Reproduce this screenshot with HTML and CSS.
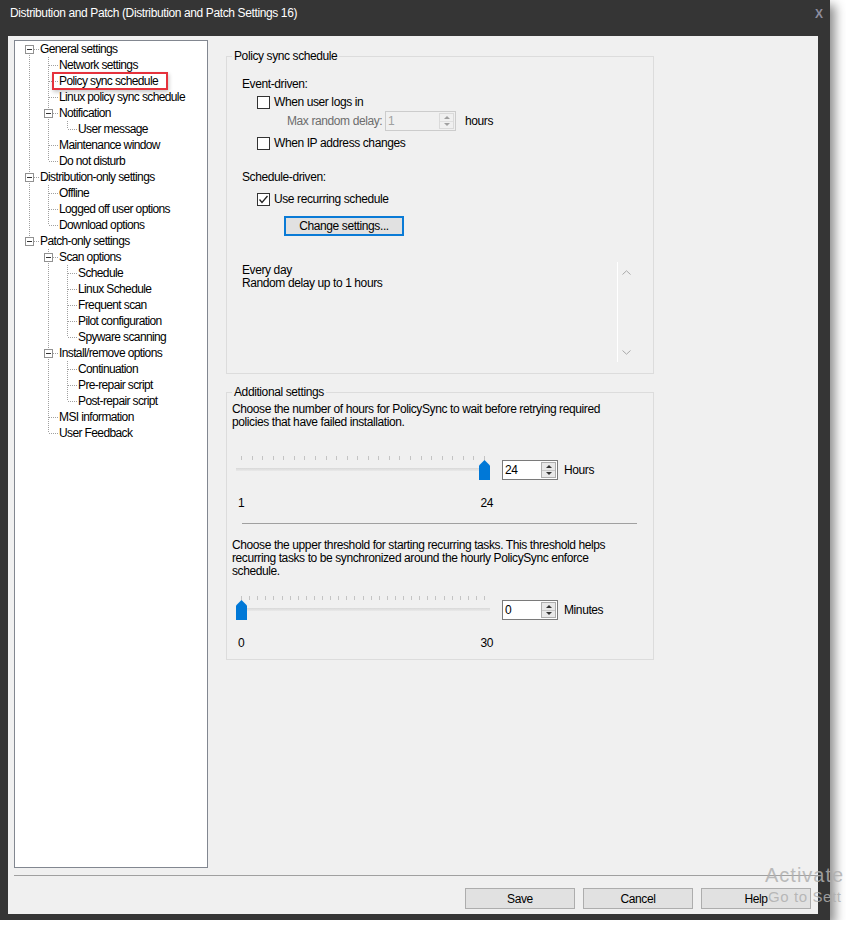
FILE: index.html
```html
<!doctype html>
<html>
<head>
  <meta charset="utf-8">
  <link rel="stylesheet" href="styles.css">
</head>
<body>
<div class="win">
  <div class="titlebar">
    <span class="title">Distribution and Patch (Distribution and Patch Settings 16)</span>
    <span class="close">X</span>
  </div>
  <div class="client">
    <div class="main">
      <div class="tree">
        <div class="row"><span class="c f"><span class="bx"></span></span><span class="lbl">General settings</span></div>
        <div class="row"><span class="c v"></span><span class="c t"></span><span class="lbl">Network settings</span></div>
        <div class="row"><span class="c v"></span><span class="c t"></span><span class="lbl sel">Policy sync schedule</span></div>
        <div class="row"><span class="c v"></span><span class="c t"></span><span class="lbl">Linux policy sync schedule</span></div>
        <div class="row"><span class="c v"></span><span class="c t"><span class="bx"></span></span><span class="lbl">Notification</span></div>
        <div class="row"><span class="c v"></span><span class="c v"></span><span class="c l"></span><span class="lbl">User message</span></div>
        <div class="row"><span class="c v"></span><span class="c t"></span><span class="lbl">Maintenance window</span></div>
        <div class="row"><span class="c v"></span><span class="c l"></span><span class="lbl">Do not disturb</span></div>
        <div class="row"><span class="c t"><span class="bx"></span></span><span class="lbl">Distribution-only settings</span></div>
        <div class="row"><span class="c v"></span><span class="c t"></span><span class="lbl">Offline</span></div>
        <div class="row"><span class="c v"></span><span class="c t"></span><span class="lbl">Logged off user options</span></div>
        <div class="row"><span class="c v"></span><span class="c l"></span><span class="lbl">Download options</span></div>
        <div class="row"><span class="c l"><span class="bx"></span></span><span class="lbl">Patch-only settings</span></div>
        <div class="row"><span class="c"></span><span class="c t"><span class="bx"></span></span><span class="lbl">Scan options</span></div>
        <div class="row"><span class="c"></span><span class="c v"></span><span class="c t"></span><span class="lbl">Schedule</span></div>
        <div class="row"><span class="c"></span><span class="c v"></span><span class="c t"></span><span class="lbl">Linux Schedule</span></div>
        <div class="row"><span class="c"></span><span class="c v"></span><span class="c t"></span><span class="lbl">Frequent scan</span></div>
        <div class="row"><span class="c"></span><span class="c v"></span><span class="c t"></span><span class="lbl">Pilot configuration</span></div>
        <div class="row"><span class="c"></span><span class="c v"></span><span class="c l"></span><span class="lbl">Spyware scanning</span></div>
        <div class="row"><span class="c"></span><span class="c t"><span class="bx"></span></span><span class="lbl">Install/remove options</span></div>
        <div class="row"><span class="c"></span><span class="c v"></span><span class="c t"></span><span class="lbl">Continuation</span></div>
        <div class="row"><span class="c"></span><span class="c v"></span><span class="c t"></span><span class="lbl">Pre-repair script</span></div>
        <div class="row"><span class="c"></span><span class="c v"></span><span class="c l"></span><span class="lbl">Post-repair script</span></div>
        <div class="row"><span class="c"></span><span class="c t"></span><span class="lbl">MSI information</span></div>
        <div class="row"><span class="c"></span><span class="c l"></span><span class="lbl">User Feedback</span></div>
      </div>

      <div class="pane">
        <fieldset class="grp grp1">
          <legend>Policy sync schedule</legend>
          <div class="hdr">Event-driven:</div>
          <div class="chk chk1"><span class="box"></span>When user logs in</div>
          <div class="delay">
            <span class="delay-lbl">Max random delay:</span>
            <span class="spin spin-dis"><span class="spin-val">1</span><span class="spin-btns"><span class="ar up"></span><span class="ar dn"></span></span></span>
            <span class="unit">hours</span>
          </div>
          <div class="chk chk2"><span class="box"></span>When IP address changes</div>
          <div class="hdr hdr2">Schedule-driven:</div>
          <div class="chk chk3"><span class="box"><svg width="11" height="11" viewBox="0 0 11 11"><polyline points="1.5,5.5 4,8.5 9.5,2" fill="none" stroke="#222" stroke-width="1.3"/></svg></span>Use recurring schedule</div>
          <button class="change">Change settings...</button>
          <div class="summary">
            <div class="summary-text">Every day<br>Random delay up to 1 hours</div>
            <div class="vscroll">
              <svg width="9" height="5" viewBox="0 0 9 5"><polyline points="0.5,4.5 4.5,0.8 8.5,4.5" fill="none" stroke="#a8a8a8" stroke-width="1"/></svg>
              <svg width="9" height="5" viewBox="0 0 9 5"><polyline points="0.5,0.5 4.5,4.2 8.5,0.5" fill="none" stroke="#a8a8a8" stroke-width="1"/></svg>
            </div>
          </div>
        </fieldset>

        <fieldset class="grp grp2">
          <legend>Additional settings</legend>
          <div class="para">Choose the number of hours for PolicySync to wait before retrying required<br>policies that have failed installation.</div>
          <div class="slider-row">
            <div class="slider hours"><span class="thumb" style="left:243px"></span></div>
            <span class="spin"><span class="spin-val">24</span><span class="spin-btns"><span class="ar up"></span><span class="ar dn"></span></span></span>
            <span class="unit2">Hours</span>
          </div>
          <div class="scale"><span>1</span><span>24</span></div>
          <div class="rule"></div>
          <div class="para para2">Choose the upper threshold for starting recurring tasks. This threshold helps<br>recurring tasks to be synchronized around the hourly PolicySync enforce<br>schedule.</div>
          <div class="slider-row row2">
            <div class="slider minutes"><span class="thumb" style="left:0px"></span></div>
            <span class="spin"><span class="spin-val">0</span><span class="spin-btns"><span class="ar up"></span><span class="ar dn"></span></span></span>
            <span class="unit2">Minutes</span>
          </div>
          <div class="scale"><span>0</span><span>30</span></div>
        </fieldset>
      </div>
    </div>
    <div class="sep"></div>
    <div class="btns">
      <button class="btn">Save</button>
      <button class="btn">Cancel</button>
      <button class="btn">Help</button>
    </div>
  </div>
</div>
<div class="activate">Activate<div class="activate-sub">Go to Sett</div></div>
</body>
</html>
```

FILE: styles.css
```css
body {
  margin: 0;
  background: #fff;
  overflow: hidden;
  font-family: "Liberation Sans", Arial, sans-serif;
  font-size: 12px;
  letter-spacing: -0.4px;
  color: #000;
}

.win {
  width: 830px;
  height: 920px;
  background: #353535;
  box-shadow: 5px 5px 10px rgba(0,0,0,.45);
}
.titlebar {
  height: 36px;
  box-sizing: border-box;
  padding: 6px 0 0 10px;
  display: flex;
  justify-content: space-between;
  align-items: flex-start;
  line-height: 14px;
  color: #fff;
  letter-spacing: -0.38px;
}
.close {
  margin: 1px 7px 0 0;
  color: #8d8d9e;
  font-weight: bold;
  letter-spacing: 0;
}

.client {
  margin-left: 8px;
  width: 810px;
  height: 878px;
  box-sizing: border-box;
  padding: 4px 0 0 6px;
  background: #f0f0f0;
}
.main {
  display: flex;
  height: 828px;
}

/* tree */
.tree {
  width: 194px;
  height: 828px;
  box-sizing: border-box;
  border: 1px solid #828790;
  background: #fff;
  padding: 0 0 0 5px;
  letter-spacing: -0.62px;
}
.row {
  display: flex;
  align-items: center;
  height: 16px;
}
.c {
  width: 19px;
  height: 16px;
  flex: none;
  display: flex;
  align-items: center;
}
.v {
  background: repeating-linear-gradient(#a0a0a0 0 1px, transparent 1px 2px) 9px 0 / 1px 16px no-repeat;
}
.t {
  background:
    repeating-linear-gradient(#a0a0a0 0 1px, transparent 1px 2px) 9px 0 / 1px 16px no-repeat,
    repeating-linear-gradient(90deg, #a0a0a0 0 1px, transparent 1px 2px) 10px 8px / 9px 1px no-repeat;
}
.l {
  background:
    repeating-linear-gradient(#a0a0a0 0 1px, transparent 1px 2px) 9px 0 / 1px 8px no-repeat,
    repeating-linear-gradient(90deg, #a0a0a0 0 1px, transparent 1px 2px) 10px 8px / 9px 1px no-repeat;
}
.f {
  background:
    repeating-linear-gradient(#a0a0a0 0 1px, transparent 1px 2px) 9px 8px / 1px 8px no-repeat,
    repeating-linear-gradient(90deg, #a0a0a0 0 1px, transparent 1px 2px) 10px 8px / 9px 1px no-repeat;
}
.bx {
  width: 9px;
  height: 9px;
  margin-left: 5px;
  box-sizing: border-box;
  border: 1px solid #919191;
  background: #fff linear-gradient(#333, #333) center / 5px 1px no-repeat;
}
.lbl {
  margin-left: 1px;
  line-height: 16px;
  white-space: nowrap;
}
.sel {
  line-height: 14px;
  padding: 0 8px 0 5px;
  margin-left: -4px;
  box-shadow: 0 0 0 2px #e5323c, 1px 2px 4px 2px rgba(0,0,0,.22);
}

/* right pane */
.pane {
  margin-left: 18px;
  padding-top: 9px;
}
.grp {
  margin: 0;
  width: 428px;
  box-sizing: border-box;
  border: 1px solid #dcdcdc;
}
.grp legend {
  padding: 0 2px;
  line-height: 14px;
}
.grp1 {
  padding: 0 0 11px 15px;
}
.grp1 legend {
  margin-left: -10px;
}
.hdr {
  margin-top: 14px;
  line-height: 14px;
}
.hdr2 {
  margin-top: 20px;
}
.chk {
  display: flex;
  align-items: center;
  gap: 4px;
  height: 14px;
  margin-left: 15px;
}
.chk1 { margin-top: 4px; }
.chk2 { margin-top: 5px; }
.chk3 { margin-top: 8px; }
.box {
  width: 13px;
  height: 13px;
  flex: none;
  box-sizing: border-box;
  border: 1px solid #333;
  background: #fff;
  display: flex;
  align-items: center;
  justify-content: center;
}
.delay {
  display: flex;
  align-items: center;
  height: 20px;
  margin: 2px 0 0 45px;
}
.delay-lbl {
  width: 98px;
  color: #6d6d6d;
}
.unit {
  margin-left: 9px;
}

.spin {
  display: flex;
  width: 56px;
  height: 20px;
  box-sizing: border-box;
  border: 1px solid #7a7a7a;
  background: #fff;
  flex: none;
}
.spin-val {
  flex: 1;
  padding-left: 2px;
  line-height: 18px;
}
.spin-btns {
  width: 15px;
  margin: 1px;
  box-sizing: border-box;
  border: 1px solid #adadad;
  background: #e8e8e8;
  display: flex;
  flex-direction: column;
}
.ar {
  flex: 1;
  display: flex;
  align-items: center;
  justify-content: center;
}
.ar::before {
  content: "";
  border-left: 3px solid transparent;
  border-right: 3px solid transparent;
}
.up::before { border-bottom: 3px solid #333; }
.dn::before { border-top: 3px solid #333; }
.dn { border-top: 1px solid #c8c8c8; }

.spin-dis {
  width: 71px;
  border-color: #cccccc;
  background: #f0f0f0;
  color: #a0a0a0;
}
.spin-dis .spin-btns {
  border-color: #dadada;
  background: #f0f0f0;
}
.spin-dis .up::before { border-bottom-color: #a0a0a0; }
.spin-dis .dn::before { border-top-color: #a0a0a0; }
.spin-dis .dn { border-top-color: #e0e0e0; }

.change {
  display: block;
  margin: 10px 0 0 42px;
  width: 120px;
  height: 20px;
  padding: 0;
  box-sizing: border-box;
  border: 2px solid #0a7bd6;
  background: #e1e1e1;
  font: inherit;
  letter-spacing: inherit;
  color: #000;
}
.summary {
  display: flex;
  width: 392px;
  height: 100px;
  margin-top: 26px;
}
.summary-text {
  flex: 1;
  padding-top: 2px;
  line-height: 13px;
}
.vscroll {
  width: 17px;
  box-sizing: border-box;
  border-left: 1px solid #fff;
  padding: 8px 0 7px;
  display: flex;
  flex-direction: column;
  justify-content: space-between;
  align-items: center;
}

.grp2 {
  margin-top: 11px;
  padding: 4px 0 9px 5px;
}
.para {
  line-height: 13px;
  white-space: nowrap;
}
.para2 {
  margin-top: 15px;
}
.slider-row {
  display: flex;
  align-items: flex-end;
  height: 24px;
  margin-top: 27px;
}
.row2 {
  margin-top: 18px;
}
.slider {
  position: relative;
  width: 254px;
  height: 24px;
  margin-left: 4px;
  margin-right: 12px;
}
.hours {
  background:
    repeating-linear-gradient(90deg, #c4c4c4 0 1px, transparent 1px 10.565px) 5px 0 / 245px 4px no-repeat,
    linear-gradient(#d8d8d8, #e9e9e9) 0 12px / 100% 3px no-repeat;
}
.minutes {
  background:
    repeating-linear-gradient(90deg, #c4c4c4 0 1px, transparent 1px 8.1px) 5px 0 / 245px 4px no-repeat,
    linear-gradient(#d8d8d8, #e9e9e9) 0 12px / 100% 3px no-repeat;
}
.thumb {
  position: absolute;
  top: 4px;
  width: 11px;
  height: 20px;
  background: #0078d7;
  clip-path: polygon(50% 0, 100% 28%, 100% 100%, 0 100%, 0 28%);
}
.unit2 {
  margin-left: 6px;
  line-height: 20px;
}
.scale {
  display: flex;
  justify-content: space-between;
  width: 255px;
  margin: 16px 0 0 6px;
  line-height: 14px;
}
.rule {
  width: 395px;
  height: 1px;
  margin: 13px 0 0 10px;
  background: #a0a0a0;
}

/* bottom */
.sep {
  width: 804px;
  height: 1px;
  margin-top: 7px;
  background: #a0a0a0;
}
.btns {
  display: flex;
  justify-content: flex-end;
  gap: 8px;
  margin-top: 12px;
  padding-right: 7px;
}
.btn {
  width: 110px;
  height: 21px;
  padding: 0;
  border: 1px solid #adadad;
  background: #e1e1e1;
  font: inherit;
  letter-spacing: -0.4px;
  color: #000;
}

.activate {
  position: absolute;
  left: 765px;
  top: 863px;
  white-space: nowrap;
  font-size: 20px;
  line-height: 24px;
  letter-spacing: 1px;
  color: rgba(175,175,175,.85);
}
.activate-sub {
  margin-left: 3px;
  font-size: 15px;
  line-height: 20px;
  letter-spacing: 0.6px;
}
```
